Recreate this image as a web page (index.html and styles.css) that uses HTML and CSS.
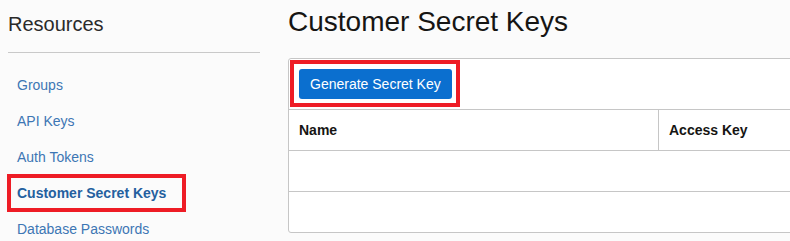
FILE: index.html
```html
<!DOCTYPE html>
<html>
<head>
<meta charset="utf-8">
<link rel="stylesheet" href="styles.css">
</head>
<body>
<div class="page">
  <aside class="sidebar">
    <h2 class="side-title">Resources</h2>
    <nav class="side-nav">
      <a class="nav-item">Groups</a>
      <a class="nav-item">API Keys</a>
      <a class="nav-item">Auth Tokens</a>
      <a class="nav-item active mark">Customer Secret Keys</a>
      <a class="nav-item">Database Passwords</a>
    </nav>
  </aside>
  <main class="main">
    <h1 class="title">Customer Secret Keys</h1>
    <section class="panel">
      <div class="toolbar">
        <button class="btn mark-btn">Generate Secret Key</button>
      </div>
      <div class="row head">
        <div class="cell c-name">Name</div>
        <div class="cell c-key">Access Key</div>
      </div>
      <div class="row body"></div>
      <div class="row body last"></div>
    </section>
  </main>
</div>
</body>
</html>
```
FILE: styles.css
```css
html, body {
  margin: 0;
  padding: 0;
}
body {
  background: #fbfbfb;
  font-family: "Liberation Sans", Arial, sans-serif;
  color: #161513;
  width: 790px;
  height: 241px;
  overflow: hidden;
}
.page {
  display: grid;
  grid-template-columns: 252px 1fr;
  column-gap: 28px;
  padding-left: 8px;
}
.sidebar {
  padding-top: 12px;
}
.side-title {
  margin: 0;
  font-size: 20px;
  line-height: 24px;
  font-weight: normal;
  color: #2a2a2a;
  padding-bottom: 16px;
  border-bottom: 1px solid #c9c9c9;
}
.side-nav {
  display: flex;
  flex-direction: column;
  margin-top: 14px;
}
.nav-item {
  display: block;
  height: 36px;
  line-height: 36px;
  padding-left: 9px;
  font-size: 14px;
  color: #3d76b4;
  text-decoration: none;
}
.nav-item.active {
  font-weight: bold;
  color: #24609f;
}
.mark {
  position: relative;
}
.mark::after {
  content: "";
  position: absolute;
  left: -1px;
  top: -1px;
  width: 179px;
  height: 38px;
  border: 4px solid #ee1c25;
  box-sizing: border-box;
}
.main {
  padding-top: 6px;
  min-width: 0;
}
.title {
  margin: 0;
  font-size: 28px;
  line-height: 32px;
  font-weight: normal;
  color: #161513;
}
.panel {
  margin-top: 20px;
  margin-right: -20px;
  background: #fff;
  border: 1px solid #c6c6c6;
  border-radius: 3px;
}
.toolbar {
  padding: 10px;
  display: flex;
}
.btn {
  position: relative;
  height: 30px;
  padding: 0 11px;
  border: none;
  border-radius: 3px;
  background: #0b6fcf;
  color: #fff;
  font-family: "Liberation Sans", Arial, sans-serif;
  font-size: 14px;
}
.mark-btn::after {
  content: "";
  position: absolute;
  left: -9px;
  top: -9px;
  width: 170px;
  height: 47px;
  border: 4px solid #ee1c25;
  box-sizing: border-box;
}
.row {
  display: flex;
  height: 40px;
  border-top: 1px solid #c6c6c6;
}
.cell {
  padding-left: 10px;
  line-height: 40px;
  font-size: 14px;
  font-weight: bold;
  color: #161513;
}
.c-name {
  width: 359px;
  border-right: 1px solid #c6c6c6;
}
.c-key {
  flex: 1;
}
```
